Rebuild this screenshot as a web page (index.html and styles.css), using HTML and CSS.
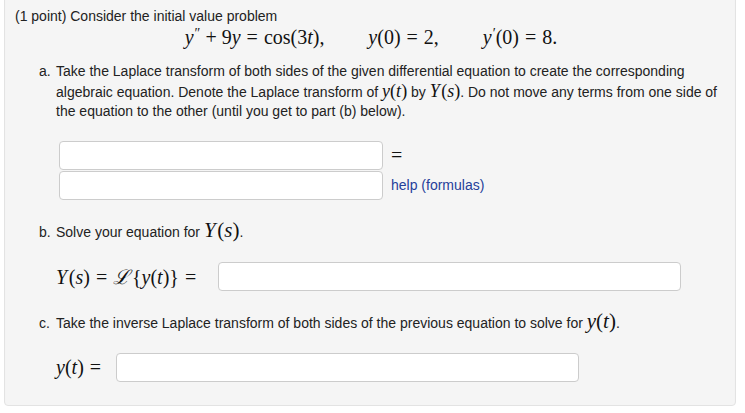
FILE: index.html
```html
<!DOCTYPE html>
<html>
<head>
<meta charset="utf-8">
<link rel="stylesheet" href="styles.css">
</head>
<body>
<div class="well">
  <div class="intro">(1 point) Consider the initial value problem</div>
  <div class="display">
    <span class="m"><i>y</i><span class="pr">″</span><span class="bin">+</span>9<i>y</i><span class="rel">=</span>cos(3<i>t</i>),</span>
    <span class="m qq"><i>y</i>(0)<span class="rel">=</span>2,</span>
    <span class="m qq"><i>y</i><span class="pr">′</span>(0)<span class="rel">=</span>8.</span>
  </div>

  <div class="part part-a">
    <span class="marker">a.</span>
    <div class="body">Take the Laplace transform of both sides of the given differential equation to create the corresponding algebraic equation. Denote the Laplace transform of <span class="mi"><i>y</i>(<i>t</i>)</span> by <span class="mi"><i>Y</i>&#8202;(<i>s</i>)</span>. Do not move any terms from one side of the equation to the other (until you get to part (b) below).</div>
  </div>

  <div class="eqgrid">
    <div class="inp"></div>
    <div class="eq">=</div>
    <div class="inp"></div>
    <a class="help" href="#">help (formulas)</a>
  </div>

  <div class="part part-b">
    <span class="marker">b.</span>
    <div class="body">Solve your equation for <span class="mi big"><i>Y</i>&#8202;(<i>s</i>)</span>.</div>
  </div>

  <div class="ansrow row-b">
    <span class="m lbl"><i>Y</i>&#8202;(<i>s</i>)<span class="rel">=</span><span class="scr">ℒ</span>&#8202;{<i>y</i>(<i>t</i>)}<span class="rel">=</span></span>
    <div class="inp ys"></div>
  </div>

  <div class="part part-c">
    <span class="marker">c.</span>
    <div class="body">Take the inverse Laplace transform of both sides of the previous equation to solve for <span class="mi big"><i>y</i>(<i>t</i>)</span>.</div>
  </div>

  <div class="ansrow row-c">
    <span class="m lbl"><i>y</i>(<i>t</i>)<span class="rel">=</span></span>
    <div class="inp yt"></div>
  </div>
</div>
</body>
</html>
```

FILE: styles.css
```css
html, body {
  margin: 0;
  padding: 0;
  background: #ffffff;
}
body {
  font-family: "Liberation Sans", Arial, sans-serif;
  font-size: 14px;
  color: #222;
}
.well {
  margin: -10px 0 0 4px;
  width: 732px;
  height: 416px;
  box-sizing: border-box;
  background: #f5f5f5;
  border: 1px solid #e3e3e3;
  border-radius: 4px;
  box-shadow: inset 0 1px 1px rgba(0,0,0,0.05);
  padding: 17px 10px 0 10px;
}
.intro {
  line-height: 16px;
}
.m {
  font-family: "Liberation Serif", "DejaVu Serif", serif;
  font-size: 20px;
  color: #111;
  white-space: nowrap;
}
.m i, .mi i {
  font-style: italic;
}
.pr {
  font-size: 14px;
  position: relative;
  top: -0.45em;
  margin-left: 1px;
}
.bin {
  margin: 0 0.25em;
}
.rel {
  margin: 0 0.3em;
}
.display {
  text-align: center;
  line-height: 22px;
  margin-top: 2px;
  padding-left: 2px;
}
.qq {
  margin-left: 40px;
}
.part {
  display: flex;
  align-items: baseline;
  padding-left: 24px;
}
.marker {
  width: 17px;
  flex: none;
}
.body {
  flex: 1;
  line-height: 19.5px;
  padding-right: 4px;
}
.mi {
  font-family: "Liberation Serif", "DejaVu Serif", serif;
  font-size: 18px;
  line-height: 1;
  color: #111;
}
.mi.big {
  font-size: 21px;
}
.part-a {
  margin-top: 11px;
}
.eqgrid {
  display: grid;
  grid-template-columns: 324px auto;
  grid-template-rows: 29px 29px;
  row-gap: 1px;
  column-gap: 8px;
  align-items: center;
  margin: 19px 0 0 44px;
}
.inp {
  background: #fff;
  border: 1px solid #ccc;
  border-radius: 4px;
  box-sizing: border-box;
  height: 29px;
}
.eq {
  font-family: "Liberation Serif", serif;
  font-size: 20px;
  line-height: 18px;
  color: #111;
}
.help {
  color: #25409a;
  text-decoration: none;
}
.part-b {
  margin-top: 20px;
}
.ansrow {
  display: flex;
  align-items: center;
  padding-left: 41px;
}
.lbl {
  margin-right: 9px;
}
.row-b .lbl {
  margin-right: 16px;
}
.scr {
  font-family: "DejaVu Serif", serif;
  font-style: italic;
}
.row-b {
  margin-top: 20px;
}
.ys {
  width: 463px;
}
.part-c {
  margin-top: 20px;
}
.row-c {
  margin-top: 19px;
}
.yt {
  width: 463px;
}
```
